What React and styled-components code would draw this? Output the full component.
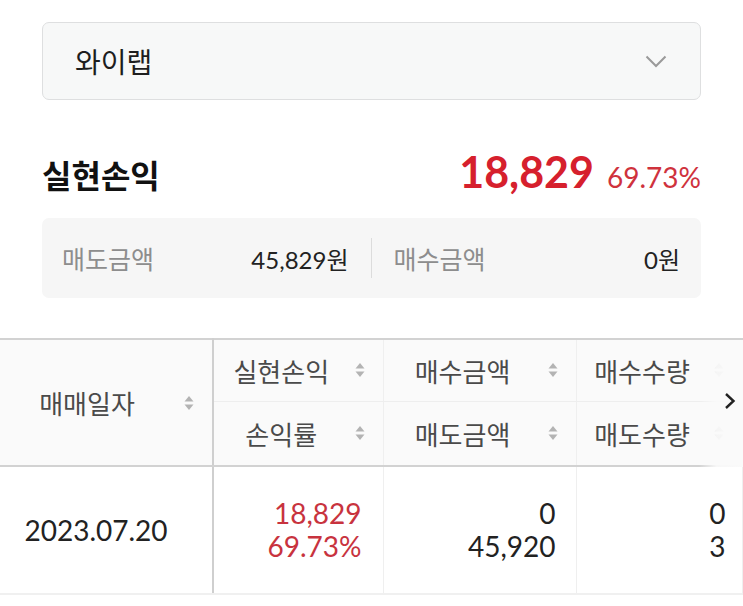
import React from 'react';
import styled, { createGlobalStyle } from 'styled-components';

const GlobalStyle = createGlobalStyle`
  html, body {
    margin: 0;
    padding: 0;
    background: #ffffff;
  }
  body {
    font-family: "Lato", "Noto Sans CJK KR", sans-serif;
    color: #222;
    width: 743px;
    overflow: hidden;
  }
`;

const Page = styled.div`
  width: 743px;
  padding-top: 22px;
`;

const Section = styled.div`
  padding: 0 42px;
`;

const Select = styled.div`
  height: 78px;
  box-sizing: border-box;
  border: 1px solid #dedfe0;
  border-radius: 7px;
  background: #f7f8f8;
  display: flex;
  align-items: center;
  justify-content: space-between;
  padding: 0 33px 0 32px;
  font-family: "Noto Sans CJK KR", sans-serif;
  font-size: 28px;
  color: #1e1e1e;
`;

const TitleRow = styled.div`
  display: flex;
  align-items: baseline;
  justify-content: space-between;
  margin-top: 46px;
  height: 50px;
`;

const Title = styled.h2`
  margin: 0;
  font-family: "Noto Sans CJK KR", sans-serif;
  font-weight: 700;
  font-size: 32px;
  color: #111;
`;

const Profit = styled.div`
  display: flex;
  align-items: baseline;
  gap: 13px;
`;

const BigNum = styled.span`
  font-family: "Lato", sans-serif;
  font-weight: 700;
  font-size: 43px;
  color: #d6202d;
`;

const Rate = styled.span`
  font-family: "Lato", sans-serif;
  font-size: 28px;
  color: #cf323d;
`;

const Summary = styled.div`
  margin-top: 22px;
  height: 80px;
  border-radius: 7px;
  background: #f6f6f6;
  display: flex;
  align-items: center;
  padding: 0 21px 0 20px;
`;

const SummaryItem = styled.div`
  flex: 1;
  display: flex;
  align-items: center;
  justify-content: space-between;
  font-size: 24px;
`;

const SummaryLabel = styled.span`
  font-family: "Noto Sans CJK KR", sans-serif;
  font-size: 25px;
  color: #8d8d8d;
`;

const SummaryValue = styled.span`
  font-family: "Lato", "Noto Sans CJK KR", sans-serif;
  color: #222;
`;

const Divider = styled.div`
  width: 1px;
  height: 40px;
  background: #dcdcdc;
  margin: 0 22px;
`;

const TableWrap = styled.div`
  position: relative;
  margin-top: 40px;
  width: 743px;
  overflow: hidden;
`;

const Table = styled.table`
  border-collapse: collapse;
  table-layout: fixed;
  width: 900px;
  border-top: 2px solid #d2d2d2;
`;

const Th = styled.th`
  background: #fafafa;
  font-family: "Noto Sans CJK KR", sans-serif;
  font-weight: 400;
  font-size: 26px;
  color: #4a4a4a;
  padding: 0 18px 0 ${p => p.$first ? 10 : 14}px;
  border-right: ${p => p.$first ? '2px solid #cfcfcf' : '1px solid #efefef'};
  border-bottom: ${p => p.$bottom ? '2px solid #d2d2d2' : '1px solid #eeeeee'};
  height: ${p => p.$h}px;
  box-sizing: border-box;
`;

const HeadInner = styled.div`
  display: flex;
  align-items: center;
`;

const HeadLabel = styled.span`
  flex: 1;
  text-align: center;
  white-space: nowrap;
`;

const Sort = styled.svg`
  width: 10px;
  height: 16px;
  margin-left: 20px;
  flex: none;
`;

const Td = styled.td`
  font-family: "Lato", sans-serif;
  font-size: 28px;
  line-height: 33px;
  height: 128px;
  box-sizing: border-box;
  padding: 0 ${p => p.$pr || 20}px 0 0;
  text-align: ${p => p.$align || 'right'};
  color: ${p => p.$red ? '#c8333e' : '#222'};
  border-right: ${p => p.$first ? '2px solid #cfcfcf' : '1px solid #efefef'};
  border-bottom: 2px solid #f0f0f0;
  white-space: nowrap;
`;

const Fade = styled.div`
  position: absolute;
  top: 2px;
  right: 0;
  width: 44px;
  height: 127px;
  background: linear-gradient(to right, rgba(250,250,250,0), rgba(250,250,250,0.93) 40%, #fafafa);
  pointer-events: none;
`;

const NextArrow = styled.svg`
  position: absolute;
  top: 54px;
  right: 7px;
  width: 12px;
  height: 18px;
`;

const SortIcon = () => (
  <Sort viewBox="0 0 10 16">
    <path d="M5 1 L9.5 6.5 L0.5 6.5 Z" fill="#b3b3b3" />
    <path d="M5 15 L9.5 9.5 L0.5 9.5 Z" fill="#b3b3b3" />
  </Sort>
);

const HeadCell = ({ label, ...rest }) => (
  <Th {...rest}>
    <HeadInner>
      <HeadLabel>{label}</HeadLabel>
      <SortIcon />
    </HeadInner>
  </Th>
);

export default function App() {
  return (
    <Page>
      <GlobalStyle />
      <Section>
        <Select>
          <span>와이랩</span>
          <svg width="22" height="13" viewBox="0 0 22 13">
            <path d="M1.5 1.5 L11 11 L20.5 1.5" fill="none" stroke="#9a9a9a" strokeWidth="2" />
          </svg>
        </Select>
        <TitleRow>
          <Title>실현손익</Title>
          <Profit>
            <BigNum>18,829</BigNum>
            <Rate>69.73%</Rate>
          </Profit>
        </TitleRow>
        <Summary>
          <SummaryItem>
            <SummaryLabel>매도금액</SummaryLabel>
            <SummaryValue>45,829원</SummaryValue>
          </SummaryItem>
          <Divider />
          <SummaryItem>
            <SummaryLabel>매수금액</SummaryLabel>
            <SummaryValue>0원</SummaryValue>
          </SummaryItem>
        </Summary>
      </Section>
      <TableWrap>
        <Table>
          <colgroup>
            <col style={{ width: 213 }} />
            <col style={{ width: 170 }} />
            <col style={{ width: 193 }} />
            <col style={{ width: 166 }} />
            <col style={{ width: 158 }} />
          </colgroup>
          <thead>
            <tr>
              <HeadCell label="매매일자" rowSpan={2} $first $bottom $h={127} />
              <HeadCell label="실현손익" $h={62} />
              <HeadCell label="매수금액" $h={62} />
              <HeadCell label="매수수량" $h={62} />
              <Th $h={62} />
            </tr>
            <tr>
              <HeadCell label="손익률" $bottom $h={65} />
              <HeadCell label="매도금액" $bottom $h={65} />
              <HeadCell label="매도수량" $bottom $h={65} />
              <Th $bottom $h={65} />
            </tr>
          </thead>
          <tbody>
            <tr>
              <Td $first $align="center" $pr={20}>2023.07.20</Td>
              <Td $red $pr={21}>18,829<br />69.73%</Td>
              <Td>0<br />45,920</Td>
              <Td $pr={16}>0<br />3</Td>
              <Td />
            </tr>
          </tbody>
        </Table>
        <Fade />
        <NextArrow viewBox="0 0 12 18">
          <path d="M2 2 L9.5 9 L2 16" fill="none" stroke="#222" strokeWidth="2.4" />
        </NextArrow>
      </TableWrap>
    </Page>
  );
}
